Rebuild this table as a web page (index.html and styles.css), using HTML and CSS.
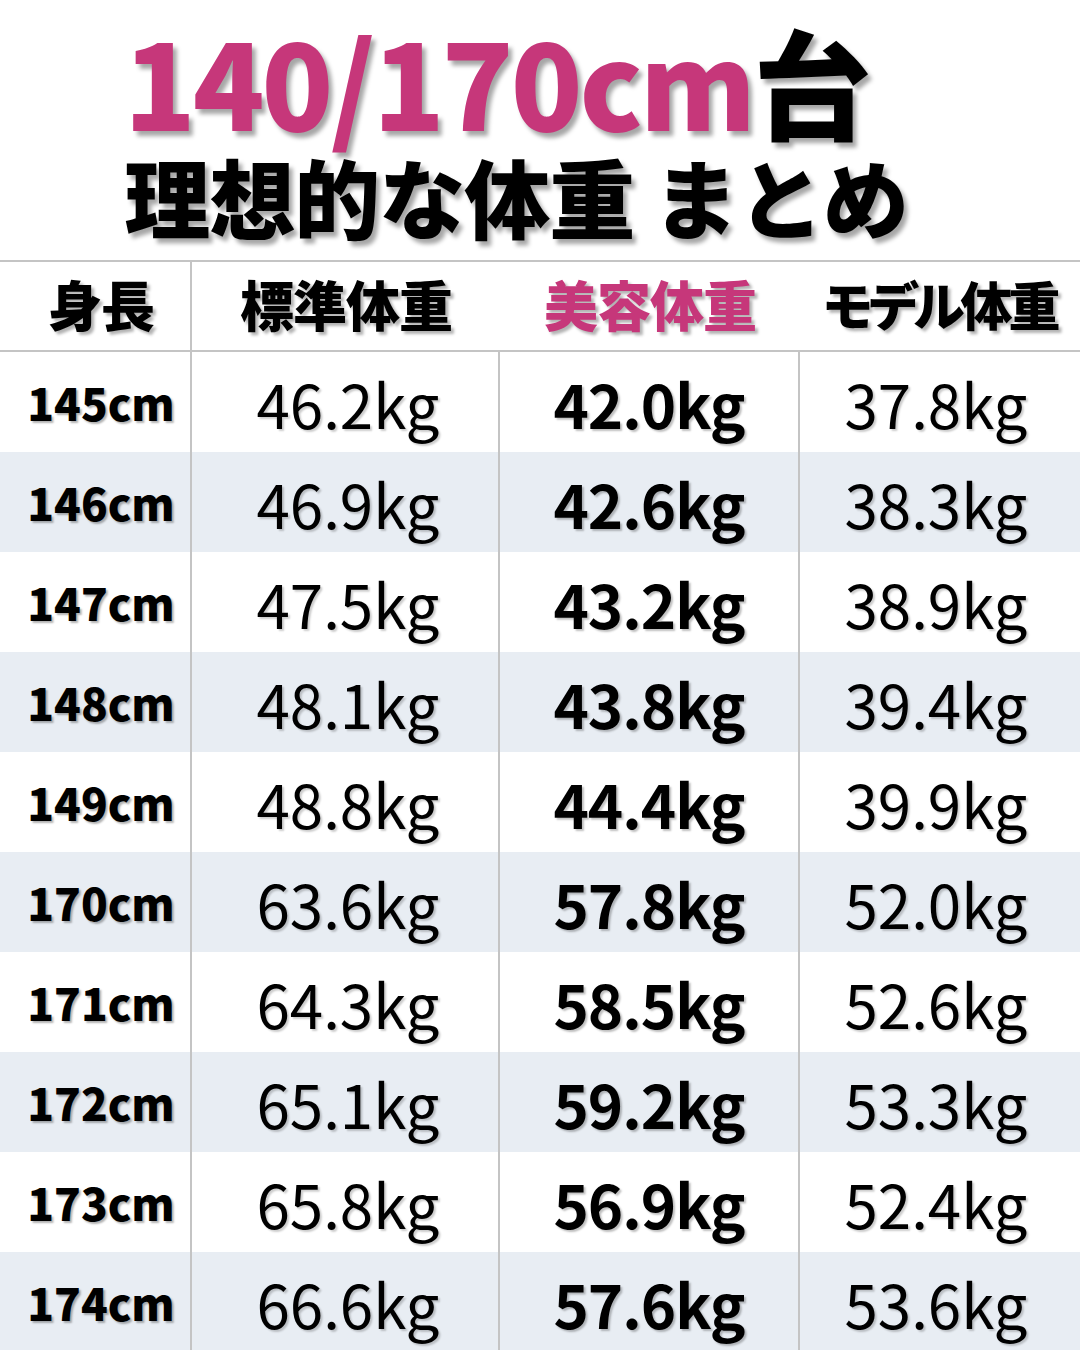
FILE: index.html
```html
<!DOCTYPE html>
<html lang="ja">
<head>
<meta charset="utf-8">
<link rel="stylesheet" href="styles.css">
</head>
<body>
<div class="page">
  <header class="title">
    <div class="line1"><span class="pink">140/170cm</span>台</div>
    <div class="line2">理想的な体重 まとめ</div>
  </header>
  <div class="table">
    <div class="hrow">
      <div class="hcell c1">身長</div>
      <div class="hcell">標準体重</div>
      <div class="hcell pink">美容体重</div>
      <div class="hcell model">モデル体重</div>
    </div>
    <div class="row"><div class="h">145cm</div><div class="std">46.2kg</div><div class="bea">42.0kg</div><div class="mod">37.8kg</div></div>
    <div class="row alt"><div class="h">146cm</div><div class="std">46.9kg</div><div class="bea">42.6kg</div><div class="mod">38.3kg</div></div>
    <div class="row"><div class="h">147cm</div><div class="std">47.5kg</div><div class="bea">43.2kg</div><div class="mod">38.9kg</div></div>
    <div class="row alt"><div class="h">148cm</div><div class="std">48.1kg</div><div class="bea">43.8kg</div><div class="mod">39.4kg</div></div>
    <div class="row"><div class="h">149cm</div><div class="std">48.8kg</div><div class="bea">44.4kg</div><div class="mod">39.9kg</div></div>
    <div class="row alt"><div class="h">170cm</div><div class="std">63.6kg</div><div class="bea">57.8kg</div><div class="mod">52.0kg</div></div>
    <div class="row"><div class="h">171cm</div><div class="std">64.3kg</div><div class="bea">58.5kg</div><div class="mod">52.6kg</div></div>
    <div class="row alt"><div class="h">172cm</div><div class="std">65.1kg</div><div class="bea">59.2kg</div><div class="mod">53.3kg</div></div>
    <div class="row"><div class="h">173cm</div><div class="std">65.8kg</div><div class="bea">56.9kg</div><div class="mod">52.4kg</div></div>
    <div class="row alt"><div class="h">174cm</div><div class="std">66.6kg</div><div class="bea">57.6kg</div><div class="mod">53.6kg</div></div>
  </div>
</div>
</body>
</html>
```

FILE: styles.css
```css
* { box-sizing: border-box; }
html, body { margin: 0; padding: 0; }
body {
  width: 1080px;
  height: 1350px;
  overflow: hidden;
  background: #fff;
  font-family: "Noto Sans CJK JP", "Noto Sans", sans-serif;
  color: #000;
}
.page { width: 1080px; }
.title {
  height: 260px;
  display: flex;
  flex-direction: column;
  align-items: center;
  padding-top: 12px;
}
.line1 {
  font-size: 118px;
  font-weight: 900;
  line-height: 136px;
  letter-spacing: -3px;
  margin-left: -88px;
  text-shadow: 4px 5px 4px rgba(0,0,0,0.35);
}
.line2 {
  font-size: 86px;
  font-weight: 900;
  line-height: 96px;
  letter-spacing: -1px;
  margin-left: -48px;
  text-shadow: 4px 5px 4px rgba(0,0,0,0.35);
}
.pink { color: #c6377a; }
.table {
  border-top: 2px solid #c4c4c4;
}
.hrow {
  display: grid;
  grid-template-columns: 192px 308px 300px 280px;
  height: 90px;
  border-bottom: 2px solid #c4c4c4;
}
.hcell {
  display: flex;
  align-items: center;
  justify-content: center;
  font-size: 54px;
  font-weight: 900;
  letter-spacing: -1px;
  padding-bottom: 6px;
  text-shadow: 3px 3px 3px rgba(0,0,0,0.3);
}
.hcell.c1 { border-right: 2px solid #c4c4c4; padding-left: 12px; }
.hcell.model { font-feature-settings: "palt"; font-size: 52px; letter-spacing: -4px; padding-left: 0; }
.row {
  display: grid;
  grid-template-columns: 192px 308px 300px 280px;
  height: 100px;
  background: #fff;
}
.row.alt { background: #e8edf3; }
.row > div {
  display: flex;
  align-items: center;
  justify-content: center;
}
.row .h {
  font-size: 44px;
  font-weight: 900;
  padding-left: 12px;
  border-right: 2px solid #c4c4c4;
  text-shadow: 2px 2px 2px rgba(0,0,0,0.3);
}
.row .std {
  font-size: 60px;
  font-weight: 400;
  padding-left: 6px;
  border-right: 2px solid #c4c4c4;
  text-shadow: 2px 2px 2px rgba(0,0,0,0.2);
}
.row .bea {
  font-size: 60px;
  font-weight: 700;
  letter-spacing: -1px;
  border-right: 2px solid #c4c4c4;
  text-shadow: 2px 2px 2px rgba(0,0,0,0.25);
}
.row .mod {
  font-size: 60px;
  font-weight: 400;
  padding-right: 8px;
  text-shadow: 2px 2px 2px rgba(0,0,0,0.2);
}
```
